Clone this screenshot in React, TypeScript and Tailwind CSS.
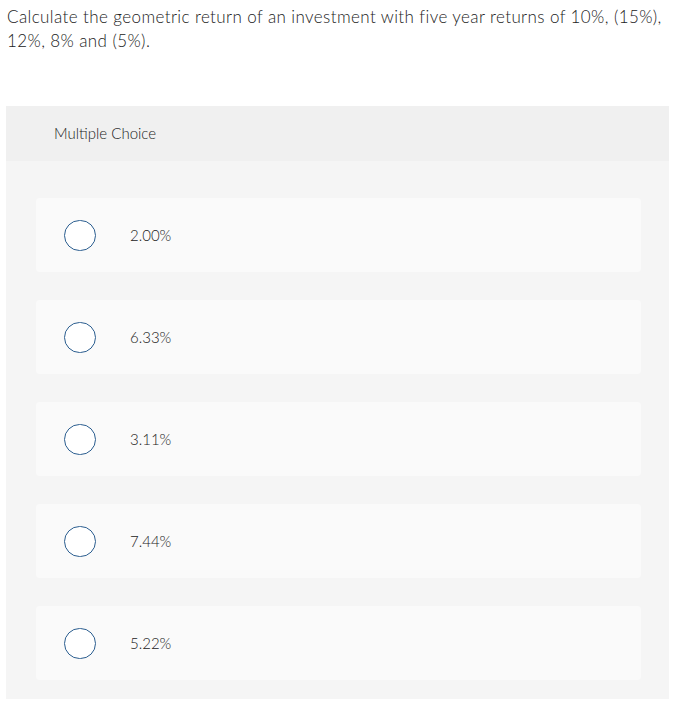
import React from "react";

const choices = ["2.00%", "6.33%", "3.11%", "7.44%", "5.22%"];

const App = () => {
  return (
    <div className="min-h-screen bg-white text-[#222] font-['Lato','Open_Sans',sans-serif] font-light">
      {/* Question */}
      <div className="px-[7px] pt-[5px] text-[17px] leading-[24px] tracking-[0.4px] w-[686px]">
        Calculate the geometric return of an investment with five year returns of 10%, (15%),
        <br />
        12%, 8% and (5%).
      </div>

      {/* Answer panel */}
      <div className="mt-[53px] ml-[6px] w-[663px] bg-[#f5f5f5]">
        <div className="h-[55px] bg-[#f0f0f0] flex items-center pl-[48px] text-[15px]">
          Multiple Choice
        </div>
        <div className="flex flex-col gap-[28px] pt-[37px] pb-[19px] pl-[30px] pr-[28px]">
          {choices.map((c) => (
            <div
              key={c}
              className="h-[74px] bg-[#fafafa] rounded-[4px] flex items-center pl-[28px]"
            >
              <span className="w-[32px] h-[31px] rounded-full border-[1.5px] border-[#2a5d8f] bg-white shrink-0" />
              <span className="ml-[34px] text-[15px]">{c}</span>
            </div>
          ))}
        </div>
      </div>
    </div>
  );
};

export default App;
